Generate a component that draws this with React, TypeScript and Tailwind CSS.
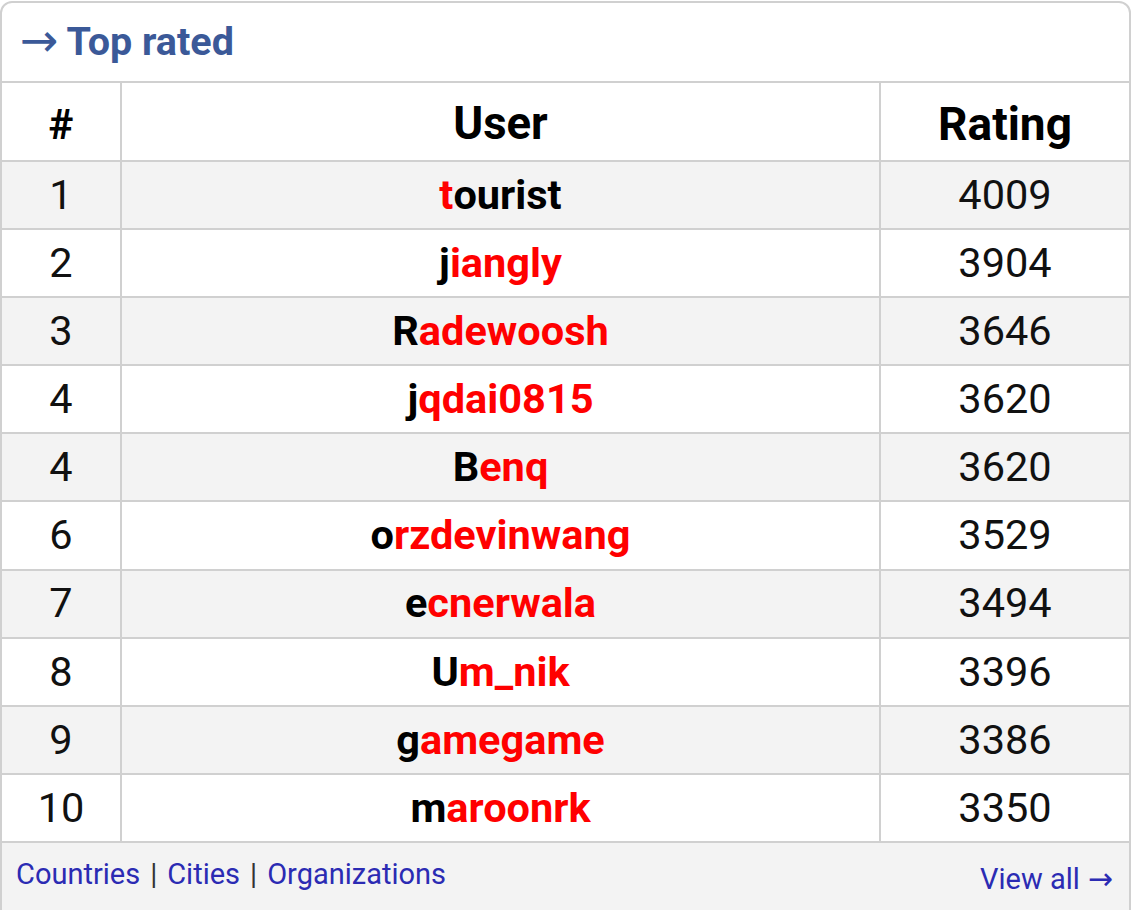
import React from "react";

const rows: { rank: number; head: string; tail: string; headRed: boolean; tailRed: boolean; rating: number }[] = [
  { rank: 1, head: "t", tail: "ourist", headRed: true, tailRed: false, rating: 4009 },
  { rank: 2, head: "j", tail: "iangly", headRed: false, tailRed: true, rating: 3904 },
  { rank: 3, head: "R", tail: "adewoosh", headRed: false, tailRed: true, rating: 3646 },
  { rank: 4, head: "j", tail: "qdai0815", headRed: false, tailRed: true, rating: 3620 },
  { rank: 4, head: "B", tail: "enq", headRed: false, tailRed: true, rating: 3620 },
  { rank: 6, head: "o", tail: "rzdevinwang", headRed: false, tailRed: true, rating: 3529 },
  { rank: 7, head: "e", tail: "cnerwala", headRed: false, tailRed: true, rating: 3494 },
  { rank: 8, head: "U", tail: "m_nik", headRed: false, tailRed: true, rating: 3396 },
  { rank: 9, head: "g", tail: "amegame", headRed: false, tailRed: true, rating: 3386 },
  { rank: 10, head: "m", tail: "aroonrk", headRed: false, tailRed: true, rating: 3350 },
];

export default function App() {
  return (
    <div className="w-[1132px] h-[910px] bg-white overflow-hidden pt-[1px]" style={{ fontFamily: "Roboto, 'Liberation Sans', sans-serif" }}>
      <div className="w-[1131px] border-2 border-[#d0d0d0] rounded-t-[12px] overflow-hidden">
        <div className="h-[78px] flex items-center pl-[18px] text-[#3b5998] font-bold text-[39.5px]">
          <span className="text-[46px] font-normal leading-none mr-[8px] -mt-[4px]" style={{ fontFamily: "'DejaVu Sans', sans-serif" }}>→</span>
          <span>Top rated</span>
        </div>
        <div className="grid grid-cols-[120px_759px_1fr] border-t-2 border-[#d0d0d0]">
          <div className="h-[77px] pt-[5px] flex items-center justify-center text-[42px] font-bold text-black border-r-2 border-[#d0d0d0]">#</div>
          <div className="h-[77px] pt-[5px] flex items-center justify-center text-[45.5px] font-bold text-black border-r-2 border-[#d0d0d0]">User</div>
          <div className="h-[77px] pt-[5px] flex items-center justify-center text-[46px] font-bold text-black">Rating</div>
        </div>
        {rows.map((r, i) => {
          const bg = i % 2 === 0 ? "bg-[#f3f3f3]" : "bg-white";
          return (
            <div key={i} className={`grid grid-cols-[120px_759px_1fr] border-t-2 border-[#d0d0d0] ${bg}`}>
              <div className="h-[66.1px] flex items-center justify-center text-[41.5px] text-[#111] border-r-2 border-[#d0d0d0]">{r.rank}</div>
              <div className="h-[66.1px] flex items-center justify-center text-[41.5px] font-bold border-r-2 border-[#d0d0d0]">
                <span className={r.headRed ? "text-[#ff0000]" : "text-black"}>{r.head}</span>
                <span className={r.tailRed ? "text-[#ff0000]" : "text-black"}>{r.tail}</span>
              </div>
              <div className="h-[66.1px] flex items-center justify-center text-[41.5px] text-[#111]">{r.rating}</div>
            </div>
          );
        })}
        <div className="h-[70px] border-t-2 border-[#d0d0d0] bg-[#f3f3f3] flex justify-between pl-[14px] pr-[16px] text-[29px]">
          <div className="pt-[10px] text-[#2b2bb3]">
            <span>Countries</span>
            <span className="text-[#333] mx-[10px]">|</span>
            <span>Cities</span>
            <span className="text-[#333] mx-[10px]">|</span>
            <span>Organizations</span>
          </div>
          <div className="pt-[13px] text-[#2b2bb3] flex items-baseline">
            <span>View all</span>
            <span className="ml-[8px] text-[30px]" style={{ fontFamily: "'DejaVu Sans', sans-serif" }}>→</span>
          </div>
        </div>
      </div>
    </div>
  );
}
